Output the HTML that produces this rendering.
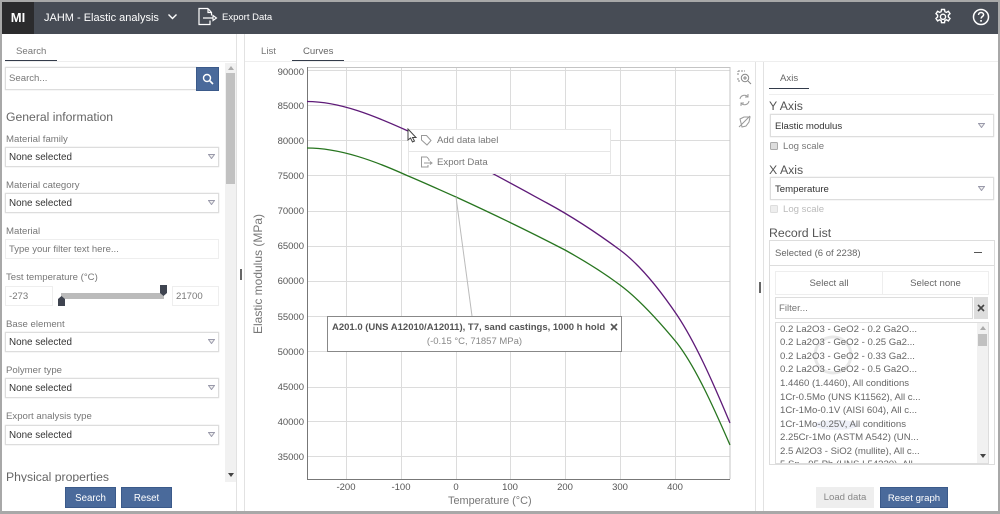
<!DOCTYPE html>
<html><head><meta charset="utf-8">
<style>
html,body{margin:0;padding:0;background:#fff}
body{width:1000px;height:514px;overflow:hidden;position:relative;font-family:"Liberation Sans",sans-serif;color:#666;font-size:9.6px;filter:blur(.3px)}
.a{position:absolute;box-sizing:border-box;white-space:nowrap}
.lb{left:6px;font-size:9.6px;color:#777;line-height:16px}
.sel{border:1px solid #ddd;box-shadow:0 0 1px #ccc;background:#fff;color:#333;font-size:9.85px;line-height:20px;padding-left:3px}
.sel i{position:absolute;right:3px;top:6px;width:7px;height:5px}
.sel.r{font-size:9.6px;line-height:23px;padding-left:4px}
.sel.r i{right:8px;top:8px}
.inp{border:1px solid #eee;background:#fff;color:#777;font-size:9.5px;line-height:20px;padding-left:3px}
.btn{background:#4a6a9b;color:#fff;border:1px solid #3b5a8a;text-align:center;font-size:9.7px;line-height:21px}
.h{font-size:12.2px;color:#666;line-height:19px}
.yl{right:696px;width:50px;text-align:right;font-size:9.5px;color:#555;line-height:12px}
.xl{width:40px;text-align:center;font-size:9.5px;color:#555;line-height:12px;top:482px}
.it{font-size:9.6px;color:#666;line-height:13px}
</style></head><body>
<!-- frame -->
<div class="a" style="left:0;top:0;width:1000px;height:2px;background:#a8a8a8"></div>
<div class="a" style="left:0;top:0;width:2px;height:514px;background:#a8a8a8"></div>
<div class="a" style="left:998px;top:0;width:2px;height:514px;background:#a8a8a8"></div>
<div class="a" style="left:0;top:511px;width:1000px;height:3px;background:#a8a8a8"></div>
<!-- header -->
<div class="a" style="left:2px;top:2px;width:996px;height:32px;background:#474c55"></div>
<div class="a" style="left:2px;top:2px;width:32px;height:32px;background:#2b2b2d;color:#fff;font-weight:bold;font-size:13px;line-height:31px;text-align:center">MI</div>
<div class="a" style="left:44px;top:10px;color:#fff;font-size:11px;line-height:16px">JAHM - Elastic analysis</div>
<svg class="a" style="left:167px;top:13px" width="11" height="8" viewBox="0 0 11 8"><path d="M1.500 1.500L5.500 5.500L9.500 1.500" fill="none" stroke="#fff" stroke-width="1.400"/></svg>
<svg class="a" style="left:197px;top:7px" width="22" height="20" viewBox="0 0 22 20"><path d="M11 1.500H2v16h11v-4M11 1.500v4h3.500M11 1.500l3.500 4v3M6 11h10" fill="none" stroke="#fff" stroke-width="1.200"/><path d="M16 8.500l3.500 2.500-3.500 2.500z" fill="none" stroke="#fff" stroke-width="1.100"/></svg>
<div class="a" style="left:222px;top:10px;color:#fff;font-size:9.5px;line-height:15px">Export Data</div>
<svg class="a" style="left:934px;top:8px" width="18" height="18" viewBox="0 0 18 18"><path d="M7.500 1.500h3l.4 2.200 1.500.7 2-1.100 1.600 2.400-1.600 1.500v1.800l1.600 1.500-1.600 2.400-2-1.100-1.500.7-.4 2.200h-3l-.4-2.200-1.500-.7-2 1.100L2 10.500l1.600-1.500V7.200L2 5.700l1.600-2.400 2 1.100 1.500-.7z" fill="none" stroke="#fff" stroke-width="1.400"/><circle cx="9" cy="8.800" r="2.600" fill="none" stroke="#fff" stroke-width="1.400"/></svg>
<svg class="a" style="left:972px;top:8px" width="18" height="18" viewBox="0 0 18 18"><circle cx="9" cy="9" r="7.500" fill="none" stroke="#fff" stroke-width="1.500"/><path d="M6.500 7c0-1.600 1.200-2.500 2.600-2.500s2.500 1 2.500 2.200c0 1.800-2.500 1.800-2.500 3.800" fill="none" stroke="#fff" stroke-width="1.500"/><rect x="8.200" y="12" width="1.700" height="1.700" fill="#fff"/></svg>

<!-- left panel -->
<div class="a" style="left:16px;top:45px;font-size:9.6px;color:#777;line-height:13px">Search</div>
<div class="a" style="left:5px;top:60px;width:52px;height:1px;background:#333b4a"></div>
<div class="a" style="left:5px;top:61px;width:231px;height:1px;background:#eee"></div>
<div class="a" style="left:5px;top:67px;width:192px;height:23px;border:1px solid #ddd;box-shadow:0 0 1px #ccc;color:#777;line-height:22px;padding-left:3px;font-size:9.6px">Search...</div>
<div class="a" style="left:196px;top:67px;width:23px;height:24px;background:#4a6a9b;border:1px solid #3b5a8a"></div>
<svg class="a" style="left:201px;top:72px" width="14" height="14" viewBox="0 0 14 14"><circle cx="6" cy="6" r="3.500" fill="none" stroke="#fff" stroke-width="1.400"/><path d="M8.500 8.500L12 12" stroke="#fff" stroke-width="1.600"/></svg>
<!-- left scrollbar -->
<div class="a" style="left:225px;top:63px;width:11px;height:419px;background:#f1f1f1"></div>
<div class="a" style="left:226px;top:73px;width:9px;height:111px;background:#c1c1c1"></div>
<svg class="a" style="left:228px;top:66px" width="6" height="4"><path d="M0 4L3 0L6 4z" fill="#aaa"/></svg>
<svg class="a" style="left:228px;top:473px" width="6" height="4"><path d="M0 0L3 4L6 0z" fill="#444"/></svg>

<div class="a h" style="left:6px;top:108px">General information</div>
<div class="a lb" style="top:132px">Material family</div>
<div class="a sel" style="left:5px;top:147px;width:214px;height:20px">None selected<i><svg width="7" height="5" style="display:block"><path d="M.5.500h6L3.500 4.500z" fill="#eee" stroke="#99a"/></svg></i></div>
<div class="a lb" style="top:178px">Material category</div>
<div class="a sel" style="left:5px;top:193px;width:214px;height:20px">None selected<i><svg width="7" height="5" style="display:block"><path d="M.5.500h6L3.500 4.500z" fill="#eee" stroke="#99a"/></svg></i></div>
<div class="a lb" style="top:224px">Material</div>
<div class="a inp" style="left:5px;top:239px;width:214px;height:20px">Type your filter text here...</div>
<div class="a lb" style="top:270px">Test temperature (°C)</div>
<div class="a inp" style="left:5px;top:286px;width:48px;height:20px;font-size:9.6px">-273</div>
<div class="a inp" style="left:172px;top:286px;width:47px;height:20px;font-size:9.6px">21700</div>
<div class="a" style="left:61px;top:293px;width:103px;height:6px;background:#bbb"></div>
<svg class="a" style="left:58px;top:296px" width="7" height="10"><path d="M0 3L3.500 0L7 3V10H0z" fill="#3f4450"/></svg>
<svg class="a" style="left:160px;top:285px" width="7" height="11"><path d="M0 0H7V8L3.500 11L0 8z" fill="#3f4450"/></svg>
<div class="a lb" style="top:317px">Base element</div>
<div class="a sel" style="left:5px;top:332px;width:214px;height:20px">None selected<i><svg width="7" height="5" style="display:block"><path d="M.5.500h6L3.500 4.500z" fill="#eee" stroke="#99a"/></svg></i></div>
<div class="a lb" style="top:363px">Polymer type</div>
<div class="a sel" style="left:5px;top:378px;width:214px;height:20px">None selected<i><svg width="7" height="5" style="display:block"><path d="M.5.500h6L3.500 4.500z" fill="#eee" stroke="#99a"/></svg></i></div>
<div class="a lb" style="top:409px">Export analysis type</div>
<div class="a sel" style="left:5px;top:425px;width:214px;height:20px">None selected<i><svg width="7" height="5" style="display:block"><path d="M.5.500h6L3.500 4.500z" fill="#eee" stroke="#99a"/></svg></i></div>
<div class="a" style="left:0;top:465px;width:225px;height:17px;overflow:hidden"><div class="a h" style="left:6px;top:3px">Physical properties</div></div>
<div class="a btn" style="left:65px;top:487px;width:51px;height:21px">Search</div>
<div class="a btn" style="left:121px;top:487px;width:51px;height:21px">Reset</div>

<!-- dividers -->
<div class="a" style="left:236px;top:34px;width:1px;height:477px;background:#e2e2e2"></div>
<div class="a" style="left:244px;top:34px;width:1px;height:477px;background:#e2e2e2"></div>
<div class="a" style="left:240px;top:269px;width:2px;height:11px;background:#666"></div>
<div class="a" style="left:755px;top:62px;width:1px;height:449px;background:#e2e2e2"></div>
<div class="a" style="left:763px;top:62px;width:1px;height:449px;background:#e2e2e2"></div>
<div class="a" style="left:759px;top:282px;width:2px;height:11px;background:#666"></div>
<div class="a" style="left:245px;top:61px;width:753px;height:1px;background:#eee"></div>

<!-- tabs -->
<div class="a" style="left:261px;top:45px;font-size:9.6px;color:#777;line-height:13px">List</div>
<div class="a" style="left:303px;top:45px;font-size:9.6px;color:#666;line-height:13px">Curves</div>
<div class="a" style="left:292px;top:60px;width:52px;height:1px;background:#333b4a"></div>

<!-- chart -->
<svg class="a" style="left:0;top:0" width="1000" height="514" viewBox="0 0 1000 514">
<g stroke="#dcdcdc" stroke-width="1" fill="none">
<path d="M346.500 67V479M401.500 67V479M456.500 67V479M510.500 67V479M565.500 67V479M620.500 67V479M675.500 67V479"/>
<path d="M307 70.500H730M307 105.500H730M307 140.500H730M307 175.500H730M307 211.500H730M307 246.500H730M307 281.500H730M307 316.500H730M307 351.500H730M307 387.500H730M307 421.500H730M307 456.500H730"/>
</g>
<path d="M307.500 67.500H730V479" fill="none" stroke="#c4c4c4"/>
<path d="M307.500 67V479.500H730" fill="none" stroke="#777"/>
<path fill="none" stroke="#5e1a78" stroke-width="1.300" d="M307 101.500C340 101.500 375 116 408 131C454 152 501 178 547 203C571 216 597 233 620 250C639 264 658 287 677 315C695 342 712 380 730 423"/>
<path fill="none" stroke="#27751f" stroke-width="1.300" d="M307 148C340 148 375 161 407 175.500C425 183 440 190 456 197C492 213.500 529 231.300 565 250C583 260 602 271.500 620 285C639 299 658 320 677 343C695 366.400 712 403.600 730 445"/>
<path d="M456 197L472 316" stroke="#bbb" fill="none"/>
<!-- toolbar icons -->
<g fill="none" stroke="#888" stroke-width="1">
<path d="M738 75v-4M738 71h7M738 78v3h3" stroke-dasharray="2 1"/>
<circle cx="745" cy="78" r="3.700"/><path d="M748 81l3 3M743 78h4M745 76v4"/>
<path d="M740 99a4.500 4.500 0 0 1 8-2M749 101a4.500 4.500 0 0 1-8 2" stroke="#999"/><path d="M748 94v3h-3M741 106v-3h3" stroke="#999"/>
<path d="M740 119l4-2 6-0-1 5-3 4-4 1zM739 127l11-11" stroke="#999"/>
</g>
<!-- checkbox -->
<rect x="770.500" y="142.500" width="7" height="7" rx="1" fill="#ddd" stroke="#aaa"/>
<rect x="770.500" y="205.500" width="7" height="7" rx="1" fill="#eee" stroke="#ddd"/>
</svg>
<!-- y labels -->
<div class="a yl" style="top:67px">90000</div>
<div class="a yl" style="top:101px">85000</div>
<div class="a yl" style="top:136px">80000</div>
<div class="a yl" style="top:171px">75000</div>
<div class="a yl" style="top:206px">70000</div>
<div class="a yl" style="top:241px">65000</div>
<div class="a yl" style="top:276px">60000</div>
<div class="a yl" style="top:312px">55000</div>
<div class="a yl" style="top:347px">50000</div>
<div class="a yl" style="top:382px">45000</div>
<div class="a yl" style="top:417px">40000</div>
<div class="a yl" style="top:452px">35000</div>
<div class="a xl" style="left:326px">-200</div>
<div class="a xl" style="left:381px">-100</div>
<div class="a xl" style="left:436px">0</div>
<div class="a xl" style="left:490px">100</div>
<div class="a xl" style="left:545px">200</div>
<div class="a xl" style="left:600px">300</div>
<div class="a xl" style="left:655px">400</div>
<div class="a" style="left:448px;top:494px;font-size:10.9px;color:#777;line-height:14px">Temperature (°C)</div>
<div class="a" style="left:258px;top:274px;font-size:12px;color:#777;line-height:14px;transform:translate(-50%,-50%) rotate(-90deg)">Elastic modulus (MPa)</div>

<!-- context menu -->
<div class="a" style="left:408px;top:129px;width:203px;height:45px;background:#fff;border:1px solid #e6e6e6"></div>
<div class="a" style="left:408px;top:151px;width:203px;height:1px;background:#e6e6e6"></div>
<div class="a" style="left:437px;top:134px;font-size:9.6px;color:#777;line-height:14px">Add data label</div>
<div class="a" style="left:437px;top:156px;font-size:9.6px;color:#777;line-height:14px">Export Data</div>
<svg class="a" style="left:420px;top:134px" width="12" height="12" viewBox="0 0 12 12"><path d="M1.500 1.500h5l4.500 5-4 4.500-5.500-5z" fill="none" stroke="#999"/></svg>
<svg class="a" style="left:420px;top:156px" width="13" height="12" viewBox="0 0 13 12"><path d="M7 1H1.500v10H8V9M7 1l2 2.500V5M4 7h7M10 5.500l2 1.500-2 1.500" fill="none" stroke="#999"/></svg>
<svg class="a" style="left:407px;top:128px" width="11" height="15" viewBox="0 0 11 15"><path d="M1 1V12L3.500 10L5.500 14L7.500 13L5.500 9.500H9z" fill="#fff" stroke="#444"/></svg>

<!-- tooltip -->
<div class="a" style="left:327px;top:316px;width:295px;height:36px;background:#fff;border:1px solid #888"></div>
<div class="a" style="left:332px;top:321px;font-size:9.5px;font-weight:bold;color:#555;line-height:14px">A201.0 (UNS A12010/A12011), T7, sand castings, 1000 h hold</div>
<svg class="a" style="left:610px;top:323px" width="8" height="8" viewBox="0 0 8 8"><path d="M1 1L7 7M7 1L1 7" stroke="#555" stroke-width="1.600"/></svg>
<div class="a" style="left:327px;top:335px;width:295px;text-align:center;font-size:9.5px;color:#888;line-height:13px">(-0.15 °C, 71857 MPa)</div>

<!-- right panel -->
<div class="a" style="left:780px;top:72px;font-size:9.6px;color:#666;line-height:14px">Axis</div>
<div class="a" style="left:769px;top:88px;width:40px;height:1px;background:#333b4a"></div>
<div class="a" style="left:769px;top:94px;width:225px;height:1px;background:#eee"></div>
<div class="a" style="left:769px;top:99px;font-size:12.3px;color:#555;line-height:15px">Y Axis</div>
<div class="a sel r" style="left:770px;top:114px;width:224px;height:23px">Elastic modulus<i><svg width="7" height="5" style="display:block"><path d="M.5.500h6L3.500 4.500z" fill="#eee" stroke="#99a"/></svg></i></div>
<div class="a" style="left:783px;top:140px;font-size:9.6px;color:#777;line-height:14px">Log scale</div>
<div class="a" style="left:769px;top:163px;font-size:12.3px;color:#555;line-height:15px">X Axis</div>
<div class="a sel r" style="left:770px;top:177px;width:224px;height:23px">Temperature<i><svg width="7" height="5" style="display:block"><path d="M.5.500h6L3.500 4.500z" fill="#eee" stroke="#99a"/></svg></i></div>
<div class="a" style="left:783px;top:203px;font-size:9.6px;color:#bbb;line-height:14px">Log scale</div>
<div class="a" style="left:769px;top:226px;font-size:12.3px;color:#555;line-height:15px">Record List</div>
<div class="a" style="left:769px;top:240px;width:226px;height:225px;border:1px solid #ddd"></div>
<div class="a" style="left:770px;top:265px;width:224px;height:1px;background:#ddd"></div>
<div class="a" style="left:775px;top:247px;font-size:9.5px;color:#666;line-height:13px">Selected (6 of 2238)</div>
<div class="a" style="left:974px;top:252px;width:8px;height:1px;background:#555"></div>
<div class="a" style="left:775px;top:271px;width:108px;height:24px;border:1px solid #eee;text-align:center;line-height:23px;color:#666">Select all</div>
<div class="a" style="left:882px;top:271px;width:107px;height:24px;border:1px solid #eee;text-align:center;line-height:23px;color:#666">Select none</div>
<div class="a" style="left:775px;top:297px;width:198px;height:22px;border:1px solid #ddd;line-height:21px;padding-left:3px;color:#777">Filter...</div>
<div class="a" style="left:974px;top:297px;width:14px;height:22px;background:#ddd"></div>
<svg class="a" style="left:977px;top:304px" width="8" height="8" viewBox="0 0 8 8"><path d="M1 1L7 7M7 1L1 7" stroke="#444" stroke-width="1.600"/></svg>
<div class="a" style="left:775px;top:322px;width:214px;height:142px;border:1px solid #ddd;overflow:hidden"></div>
<svg class="a" style="left:800px;top:335px" width="70" height="130" viewBox="0 0 70 130"><circle cx="33" cy="20" r="18" fill="none" stroke="#e8e8e8" stroke-width="3"/><ellipse cx="36" cy="90" rx="22" ry="5" fill="#eef0f8"/></svg>
<div class="a" style="left:776px;top:323px;width:200px;height:140px;overflow:hidden">
<div class="a it" style="left:4px;top:0">0.2 La2O3 - GeO2 - 0.2 Ga2O...</div>
<div class="a it" style="left:4px;top:13px">0.2 La2O3 - GeO2 - 0.25 Ga2...</div>
<div class="a it" style="left:4px;top:27px">0.2 La2O3 - GeO2 - 0.33 Ga2...</div>
<div class="a it" style="left:4px;top:40px">0.2 La2O3 - GeO2 - 0.5 Ga2O...</div>
<div class="a it" style="left:4px;top:54px">1.4460 (1.4460), All conditions</div>
<div class="a it" style="left:4px;top:68px">1Cr-0.5Mo (UNS K11562), All c...</div>
<div class="a it" style="left:4px;top:81px">1Cr-1Mo-0.1V (AISI 604), All c...</div>
<div class="a it" style="left:4px;top:95px">1Cr-1Mo-0.25V, All conditions</div>
<div class="a it" style="left:4px;top:108px">2.25Cr-1Mo (ASTM A542) (UN...</div>
<div class="a it" style="left:4px;top:122px">2.5 Al2O3 - SiO2 (mullite), All c...</div>
<div class="a it" style="left:4px;top:135px">5 Sn - 95 Pb (UNS L54320), All ...</div>
</div>
<div class="a" style="left:977px;top:323px;width:11px;height:140px;background:#f1f1f1"></div>
<div class="a" style="left:978px;top:334px;width:9px;height:12px;background:#c1c1c1"></div>
<svg class="a" style="left:980px;top:326px" width="6" height="4"><path d="M0 4L3 0L6 4z" fill="#aaa"/></svg>
<svg class="a" style="left:980px;top:454px" width="6" height="4"><path d="M0 0L3 4L6 0z" fill="#444"/></svg>
<div class="a" style="left:816px;top:487px;width:58px;height:21px;background:#eee;color:#888;text-align:center;line-height:22px;font-size:9.6px">Load data</div>
<div class="a btn" style="left:880px;top:487px;width:68px;height:21px;font-size:9.6px">Reset graph</div>
</body></html>
